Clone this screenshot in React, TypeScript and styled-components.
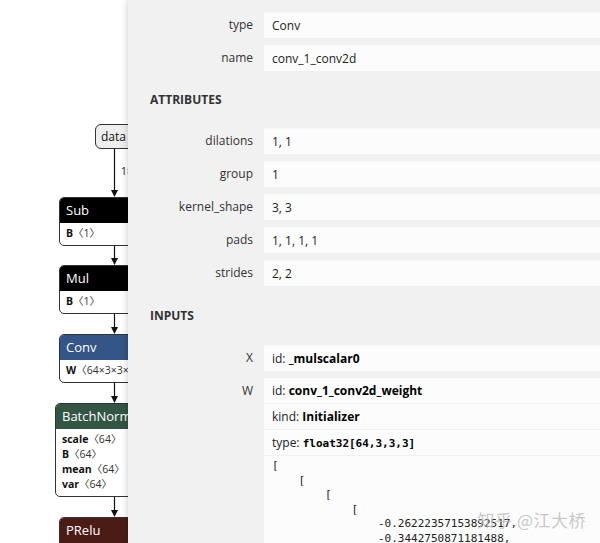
import styled, { createGlobalStyle } from "styled-components";

const GlobalStyle = createGlobalStyle`
  html, body {
    margin: 0;
    padding: 0;
    overflow: hidden;
    background: #fff;
  }
  body {
    font-family: "Open Sans", "Noto Sans", "Noto Sans CJK SC", sans-serif;
  }
`;

type GraphNode = {
  title: string;
  color: string;
  left: number;
  top: number;
  attrs: string[];
};

const nodes: GraphNode[] = [
  { title: "Sub", color: "#000000", left: 59, top: 197, attrs: ["B|〈1〉"] },
  { title: "Mul", color: "#000000", left: 59, top: 265, attrs: ["B|〈1〉"] },
  { title: "Conv", color: "#335588", left: 59, top: 334, attrs: ["W|〈64×3×3×3〉"] },
  {
    title: "BatchNormalization",
    color: "#335544",
    left: 55,
    top: 403,
    attrs: ["scale|〈64〉", "B|〈64〉", "mean|〈64〉", "var|〈64〉"],
  },
  { title: "PRelu", color: "#4b1b16", left: 59, top: 517, attrs: ["slope|〈64×1×1〉"] },
];

// vertical edges at x = 114: [from, to]
const edges: [number, number][] = [
  [149, 197],
  [243, 265],
  [311, 334],
  [381, 403],
  [495, 517],
];

const attributes = [
  ["dilations", "1, 1"],
  ["group", "1"],
  ["kernel_shape", "3, 3"],
  ["pads", "1, 1, 1, 1"],
  ["strides", "2, 2"],
];

const arrayLines = [
  "[",
  "    [",
  "        [",
  "            [",
  "                -0.26222357153892517,",
  "                -0.3442750871181488,",
];

export default function App() {
  return (
    <>
      <GlobalStyle />
      <Page>
        <Canvas>
          <Edges width="128" height="543">
            {edges.map(([a, b]) => (
              <g key={a}>
                <line x1="114.5" y1={a} x2="114.5" y2={b - 6} stroke="#111" strokeWidth="1.2" />
                <polygon points={`111,${b - 7} 118,${b - 7} 114.5,${b}`} fill="#111" />
              </g>
            ))}
          </Edges>
          <EdgeLabel>1×3×112×112</EdgeLabel>
          <InputNode>data</InputNode>
          {nodes.map((n) => (
            <Node key={n.title} style={{ left: n.left, top: n.top }}>
              <NodeHeader $color={n.color}>{n.title}</NodeHeader>
              <NodeAttrs>
                {n.attrs.map((a) => {
                  const [k, v] = a.split("|");
                  return (
                    <NodeAttr key={k}>
                      <b>{k}</b>
                      <Shape>{v}</Shape>
                    </NodeAttr>
                  );
                })}
              </NodeAttrs>
            </Node>
          ))}
        </Canvas>

        <Panel>
          <Row>
            <Label>type</Label>
            <Value>Conv</Value>
          </Row>
          <Row>
            <Label>name</Label>
            <Value>conv_1_conv2d</Value>
          </Row>

          <SectionTitle>ATTRIBUTES</SectionTitle>
          {attributes.map(([k, v]) => (
            <Row key={k}>
              <Label>{k}</Label>
              <Value>{v}</Value>
            </Row>
          ))}

          <SectionTitle $wide>INPUTS</SectionTitle>
          <Row>
            <Label>X</Label>
            <Value>
              id: <b>_mulscalar0</b>
            </Value>
          </Row>
          <Row>
            <Label>W</Label>
            <ValueStack>
              <SubLine>
                id: <b>conv_1_conv2d_weight</b>
              </SubLine>
              <SubLine>
                kind: <b>Initializer</b>
              </SubLine>
              <SubLine>
                type: <Code>float32[64,3,3,3]</Code>
              </SubLine>
              <ArrayBlock>{arrayLines.join("\n")}</ArrayBlock>
            </ValueStack>
          </Row>
          <Watermark>知乎 @江大桥</Watermark>
        </Panel>
      </Page>
    </>
  );
}

const Page = styled.div`
  display: flex;
  width: 100vw;
  height: 100vh;
  overflow: hidden;
`;

const Canvas = styled.div`
  position: relative;
  flex: 0 0 128px;
  height: 100%;
  overflow: hidden;
  background: #fff;
  font-family: "Open Sans", "Noto Sans", "Noto Sans CJK SC", sans-serif;
`;

const Edges = styled.svg`
  position: absolute;
  left: 0;
  top: 0;
`;

const EdgeLabel = styled.div`
  position: absolute;
  left: 121px;
  top: 164px;
  font-size: 10px;
  color: #222;
  white-space: nowrap;
`;

const InputNode = styled.div`
  position: absolute;
  left: 95px;
  top: 124px;
  width: 60px;
  height: 25px;
  box-sizing: border-box;
  padding: 0 4px 0 5px;
  border: 1px solid #333;
  border-radius: 6px;
  background: #eeeeee;
  font-size: 12px;
  line-height: 23px;
  color: #111;
`;

const Node = styled.div`
  position: absolute;
  width: 150px;
  border: 1px solid #333;
  border-radius: 5px;
  overflow: hidden;
  background: #fff;
`;

const NodeHeader = styled.div<{ $color: string }>`
  height: 25px;
  padding: 0 6px;
  background: ${({ $color }) => $color};
  color: #fff;
  font-size: 13px;
  line-height: 25px;
  white-space: nowrap;
`;

const NodeAttrs = styled.div`
  padding: 3px 6px 4px;
`;

const NodeAttr = styled.div`
  font-size: 10.5px;
  line-height: 15px;
  color: #111;
  white-space: nowrap;

  b {
    font-weight: 700;
  }
`;

const Shape = styled.span`
  color: #333;
  font-family: "Open Sans", "Noto Sans CJK SC", sans-serif;
`;

const Panel = styled.div`
  position: relative;
  z-index: 1;
  flex: 1;
  height: 100%;
  overflow: hidden;
  box-sizing: border-box;
  padding: 12px 0 0 22px;
  background: #f1f1f1;
  box-shadow: 0 0 7px rgba(0, 0, 0, 0.22);
  color: #222;
  font-size: 12px;
`;

const Row = styled.div`
  display: grid;
  grid-template-columns: 103px 1fr;
  column-gap: 11px;
  margin-bottom: 7px;
`;

const Label = styled.div`
  text-align: right;
  line-height: 26px;
  color: #333;
  white-space: nowrap;
`;

const Value = styled.div`
  height: 26px;
  box-sizing: border-box;
  padding: 0 8px;
  line-height: 26px;
  background: #fcfcfc;
  border-top: 1px solid #f8f8f8;
  color: #222;
  white-space: nowrap;

  b {
    font-weight: 700;
    color: #000;
  }
`;

const ValueStack = styled.div`
  background: #fcfcfc;
  display: flex;
  flex-direction: column;
`;

const SubLine = styled.div`
  height: 26px;
  box-sizing: border-box;
  padding: 0 8px;
  line-height: 26px;
  border-bottom: 1px solid #f0f0f0;
  white-space: nowrap;

  b {
    font-weight: 700;
    color: #000;
  }
`;

const Code = styled.span`
  font-family: "DejaVu Sans Mono", "Liberation Mono", monospace;
  font-size: 11px;
  font-weight: 700;
  color: #000;
`;

const ArrayBlock = styled.pre`
  margin: 0;
  padding: 3px 8px 0;
  font-family: "DejaVu Sans Mono", "Liberation Mono", monospace;
  font-size: 11px;
  line-height: 14.5px;
  color: #222;
`;

const SectionTitle = styled.div<{ $wide?: boolean }>`
  padding: ${({ $wide }) => ($wide ? "15px 0 21px" : "14px 0 20px")};
  font-size: 12px;
  line-height: 16px;
  font-weight: 700;
  color: #333;
`;

const Watermark = styled.div`
  position: absolute;
  right: 14px;
  bottom: 11px;
  font-family: "Noto Sans CJK SC", sans-serif;
  font-size: 17px;
  color: rgba(190, 190, 190, 0.85);
  letter-spacing: 0.5px;
`;
